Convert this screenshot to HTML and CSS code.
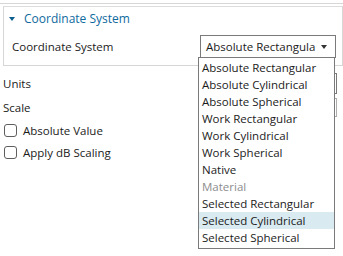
FILE: index.html
```html
<!DOCTYPE html>
<html>
<head>
<meta charset="utf-8">
<link rel="stylesheet" href="styles.css">
</head>
<body>
<div class="page">
  <div class="topline"></div>
  <section class="group">
    <div class="group-head"><span class="caret"></span><span class="group-title">Coordinate System</span></div>
    <div class="row">
      <span class="label">Coordinate System</span>
      <div class="select"><span class="select-text">Absolute Rectangula</span><span class="select-arrow"></span></div>
    </div>
  </section>
  <div class="field first">
    <span class="label">Units</span>
    <div class="under-select"></div>
  </div>
  <div class="field">
    <span class="label">Scale</span>
    <div class="under-input"><span class="paren">)</span></div>
  </div>
  <label class="check"><span class="box"></span>Absolute Value</label>
  <label class="check"><span class="box"></span>Apply dB Scaling</label>

  <ul class="popup">
    <li>Absolute Rectangular</li>
    <li>Absolute Cylindrical</li>
    <li>Absolute Spherical</li>
    <li>Work Rectangular</li>
    <li>Work Cylindrical</li>
    <li>Work Spherical</li>
    <li>Native</li>
    <li class="disabled">Material</li>
    <li>Selected Rectangular</li>
    <li class="hover">Selected Cylindrical</li>
    <li>Selected Spherical</li>
  </ul>
</div>
</body>
</html>
```
FILE: styles.css
```css
html, body {
  margin: 0;
  padding: 0;
  background: #ffffff;
}
body {
  font-family: "Segoe UI", "Open Sans", "Noto Sans", sans-serif;
  font-size: 11.5px;
  color: #1b1b1b;
}
.page {
  position: relative;
  width: 343px;
  height: 256px;
  overflow: hidden;
}
.topline {
  margin-top: 3px;
  height: 0;
  border-top: 1px solid #d6d6d6;
}
.group {
  margin: 2px 0 0 3px;
  width: 338px;
  height: 58px;
  border: 1px solid #d6d6d6;
  border-top-color: #dcdcdc;
}
.group-head {
  display: flex;
  align-items: center;
  height: 22px;
  padding-left: 5px;
}
.caret {
  width: 0;
  height: 0;
  border-left: 3.5px solid transparent;
  border-right: 3.5px solid transparent;
  border-top: 4px solid #0d5f8f;
  margin-right: 9px;
  margin-top: 1px;
}
.group-title {
  color: #0f6aa0;
  font-size: 12px;
}
.row {
  display: flex;
  align-items: center;
  justify-content: space-between;
  padding: 6px 6px 0 8px;
}
.select {
  display: flex;
  align-items: center;
  justify-content: space-between;
  border: 1px solid #7a7a7a;
  padding: 0 8px 0 5px;
  box-sizing: border-box;
  width: 136px;
  height: 23px;
}
.select-arrow {
  width: 0;
  height: 0;
  border-left: 3.5px solid transparent;
  border-right: 3.5px solid transparent;
  border-top: 4px solid #333;
}
.field {
  display: flex;
  align-items: center;
  justify-content: space-between;
  height: 24px;
  padding: 0 6px 0 3px;
}
.field.first { margin-top: 5px; }
.under-select {
  width: 120px;
  height: 19px;
  border: 1px solid #7a7a7a;
}
.under-input {
  width: 120px;
  height: 17px;
  border: 1px solid #adadad;
  display: flex;
  justify-content: flex-end;
  align-items: center;
}
.paren {
  color: #d07a10;
  padding-right: 1px;
}
.check {
  display: flex;
  align-items: center;
  height: 22px;
  padding-left: 4px;
}
.box {
  width: 11px;
  height: 11px;
  border: 1px solid #5e5e5e;
  border-radius: 3px;
  margin-right: 6px;
}
.popup {
  position: absolute;
  left: 198px;
  top: 57px;
  width: 135px;
  margin: 0;
  padding: 1px 0 2px;
  list-style: none;
  background: #ffffff;
  border: 1px solid #7a7a7a;
  font-size: 11.5px;
}
.popup li {
  height: 17px;
  line-height: 17px;
  padding-left: 3px;
  white-space: nowrap;
}
.popup li.disabled { color: #8d8d8d; }
.popup li.hover { background: #d9eaf1; }
```
